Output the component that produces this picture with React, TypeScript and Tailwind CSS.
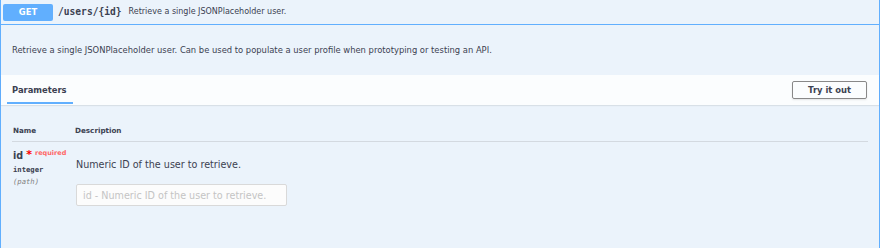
const sans = { fontFamily: '"DejaVu Sans", "Noto Sans", sans-serif' };

export default function App() {
  return (
    <div className="w-[880px] h-[248px] overflow-hidden bg-white text-[#3b4151]" style={sans}>
      <div className="h-full border-x border-[#61affe] bg-[#ebf3fb]">
        {/* Summary */}
        <div className="flex h-[25px] items-center border-b border-[#61affe] px-[2px]">
          <div className="flex h-[17px] w-[50px] items-center justify-center rounded-[2px] bg-[#61affe] text-[8.4px] font-bold text-white">
            GET
          </div>
          <span className="ml-[5px] font-['DejaVu_Sans_Mono',monospace] text-[9.6px] font-bold text-[#3b4151]">
            /users/{'{id}'}
          </span>
          <span className="ml-[7px] text-[8px] text-[#3b4151]">Retrieve a single JSONPlaceholder user.</span>
        </div>

        {/* Description */}
        <div className="flex h-[50px] items-center px-[11px] text-[8.4px]">
          Retrieve a single JSONPlaceholder user. Can be used to populate a user profile when prototyping or testing an API.
        </div>

        {/* Section header */}
        <div className="flex h-[30px] items-center justify-between bg-[#fbfdfe] px-[11px] shadow-[0_1px_1px_rgba(0,0,0,0.08)]">
          <div className="relative flex h-full items-center">
            <span className="text-[8.4px] font-bold">Parameters</span>
            <div className="absolute bottom-[1px] left-[-5px] right-[-6px] h-[2.5px] bg-[#61affe]" />
          </div>
          <button className="mr-[1px] h-[18px] w-[75px] rounded-[2px] border border-[#888] bg-transparent text-[8.4px] font-bold text-[#3b4151] shadow-[0_1px_2px_rgba(0,0,0,0.1)]">
            Try it out
          </button>
        </div>

        {/* Table */}
        <div className="px-[11px]">
          <div className="flex h-[37px] items-end border-b border-[#d3d9e0] pb-[4px] text-[7.2px] font-bold">
            <div className="w-[63px] pl-px">Name</div>
            <div>Description</div>
          </div>
          <div className="flex pt-[7px]">
            <div className="w-[63px] pl-px">
              <div className="flex items-start">
                <span className="text-[9.6px] font-bold leading-[14px]">id</span>
                <span className="ml-[3px] text-[11px] font-bold leading-[11px] text-[#ff0000]">*</span>
                <span className="ml-[3px] text-[6.5px] font-semibold leading-[8px] text-[#ff6666]">required</span>
              </div>
              <div className="mt-[1px] font-['DejaVu_Sans_Mono',monospace] text-[7.2px] font-bold leading-[12px]">integer</div>
              <div className="font-['DejaVu_Sans_Mono',monospace] text-[7.2px] italic leading-[12px] text-[#808080]">(path)</div>
            </div>
            <div className="pl-px">
              <div className="mt-[10px] text-[9.6px] leading-[12px]">Numeric ID of the user to retrieve.</div>
              <input
                className="mt-[13px] box-border h-[22px] w-[211px] rounded-[2px] border border-[#d9d9d9] bg-[#fcfcfc] px-[6px] text-[9.6px] outline-none placeholder:text-[#c4c4c4]"
                placeholder="id - Numeric ID of the user to retrieve."
                style={sans}
              />
            </div>
          </div>
        </div>
      </div>
    </div>
  );
}
